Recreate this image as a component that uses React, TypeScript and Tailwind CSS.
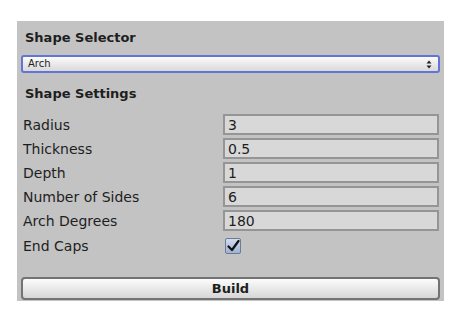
const fields = [
  { label: "Radius", value: "3" },
  { label: "Thickness", value: "0.5" },
  { label: "Depth", value: "1" },
  { label: "Number of Sides", value: "6" },
  { label: "Arch Degrees", value: "180" },
];

export default function App() {
  return (
    <div
      className="h-[325px] w-[474px] bg-white pl-[17px] pt-[21px] text-[#1e1e1e]"
      style={{ fontFamily: '"DejaVu Sans", sans-serif' }}
    >
      <div className="flex w-[427px] flex-col bg-[#c3c3c3] px-[4px] pb-[1px] pt-[7px]">
        <div className="pl-[4px] text-[13px] font-bold leading-[20px]">
          Shape Selector
        </div>

        <div className="mt-[7px] flex h-[18px] items-center justify-between rounded-[3px] border-2 border-[#6474d4] bg-gradient-to-b from-[#fbfbfb] to-[#d9d9d9] pl-[5px] pr-[6px]">
          <span className="text-[10px] leading-none">Arch</span>
          <svg width="6" height="9" viewBox="0 0 6 9">
            <path d="M3 0.5 L5.5 3.5 H0.5 Z" fill="#222" />
            <path d="M3 8.5 L5.5 5.5 H0.5 Z" fill="#222" />
          </svg>
        </div>

        <div className="mt-[11px] pl-[4px] text-[13px] font-bold leading-[20px]">
          Shape Settings
        </div>

        <div className="mt-[10px] flex flex-col gap-[3px]">
          {fields.map((f) => (
            <div key={f.label} className="flex h-[21px] items-center">
              <span className="w-[202px] pl-[2px] text-[14px] leading-none">
                {f.label}
              </span>
              <div className="flex h-[21px] w-[216px] items-center border-2 border-[#959595] bg-[#d8d8d8] pl-[3px] text-[14px] leading-none">
                {f.value}
              </div>
            </div>
          ))}
        </div>

        <div className="mt-[4px] flex h-[21px] items-center">
          <span className="w-[204px] pl-[2px] text-[14px] leading-none">
            End Caps
          </span>
          <div className="flex h-[16px] w-[16px] items-center justify-center rounded-[2px] border border-[#6f7a94] bg-gradient-to-b from-[#d2dcef] to-[#9fb1d3]">
            <svg width="13" height="12" viewBox="0 0 13 12">
              <path
                d="M1.5 6.5 L5 10 L11.5 1"
                fill="none"
                stroke="#111"
                strokeWidth="2.2"
                strokeLinecap="round"
                strokeLinejoin="round"
              />
            </svg>
          </div>
        </div>

        <button className="mt-[21px] flex h-[23px] items-center justify-center rounded-[4px] border-2 border-[#737373] bg-gradient-to-b from-[#fcfcfc] to-[#d6d6d6] text-[13px] font-bold leading-none">
          Build
        </button>
      </div>
    </div>
  );
}
